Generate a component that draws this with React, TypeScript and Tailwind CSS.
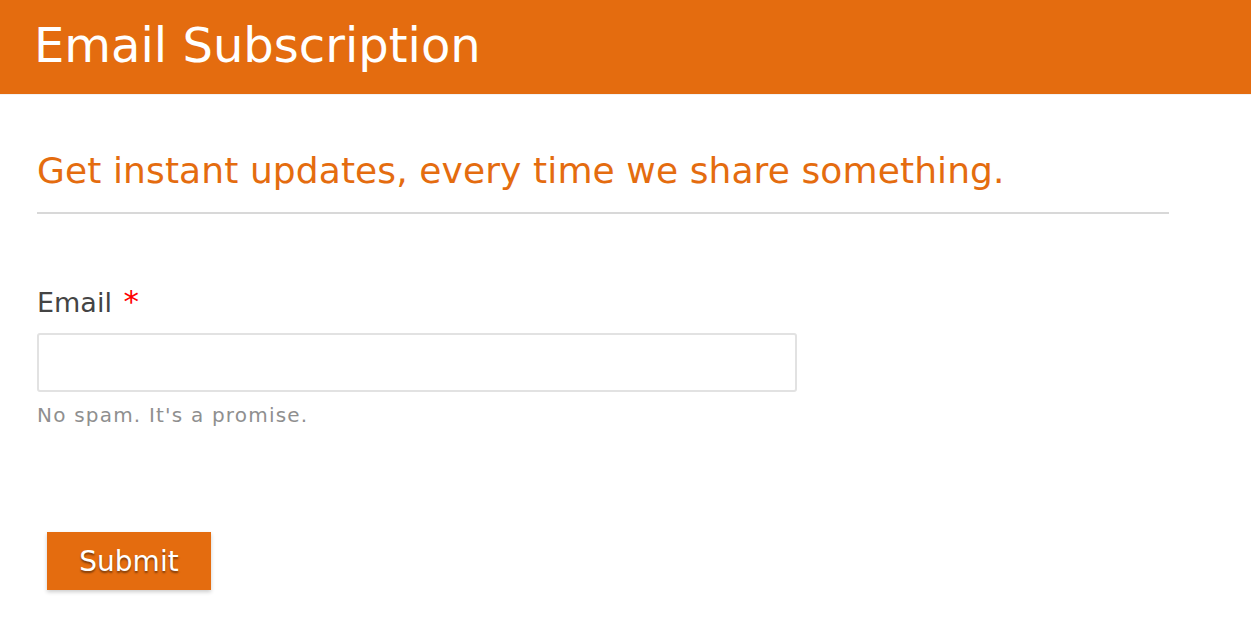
import React from 'react';

const font = { fontFamily: '"DejaVu Sans", Verdana, sans-serif' };

export default function App() {
  return (
    <div className="min-h-screen w-full bg-white" style={font}>
      <header className="h-[95px] bg-[#e46c0f] flex items-center pl-[34px] border-b border-[#f3f3f3]">
        <h1 className="text-[48px] leading-none text-white pb-[4px]">Email Subscription</h1>
      </header>

      <div className="pl-[37px] pr-[82px]">
        <div className="pt-[55px] pb-[20px] border-b-2 border-[#d8d8d8]">
          <h2 className="text-[36px] leading-[42px] tracking-[0.1px] text-[#e46c0f]">
            Get instant updates, every time we share something.
          </h2>
        </div>

        <form className="pt-[71px]" onSubmit={(e) => e.preventDefault()}>
          <label className="block text-[27px] leading-[32px] text-[#444444]">
            Email <span className="ml-[3px] text-[#ff0000] text-[31px]">*</span>
          </label>
          <input
            type="email"
            className="mt-[14px] block w-[760px] h-[59px] rounded-[3px] border-2 border-[#e2e2e2] outline-none px-3 text-[22px]"
          />
          <p className="mt-[10px] text-[20px] leading-[26px] tracking-[1.2px] text-[#8f8f8f]">No spam. It's a promise.</p>

          <button
            type="submit"
            className="mt-[104px] ml-[10px] w-[164px] h-[58px] bg-[#e46c0f] text-white text-[28px] leading-none pt-[2px] shadow-[0_2px_4px_rgba(0,0,0,0.2)] [text-shadow:0_2px_2px_rgba(0,0,0,0.45)]"
          >
            Submit
          </button>
        </form>
      </div>
    </div>
  );
}
